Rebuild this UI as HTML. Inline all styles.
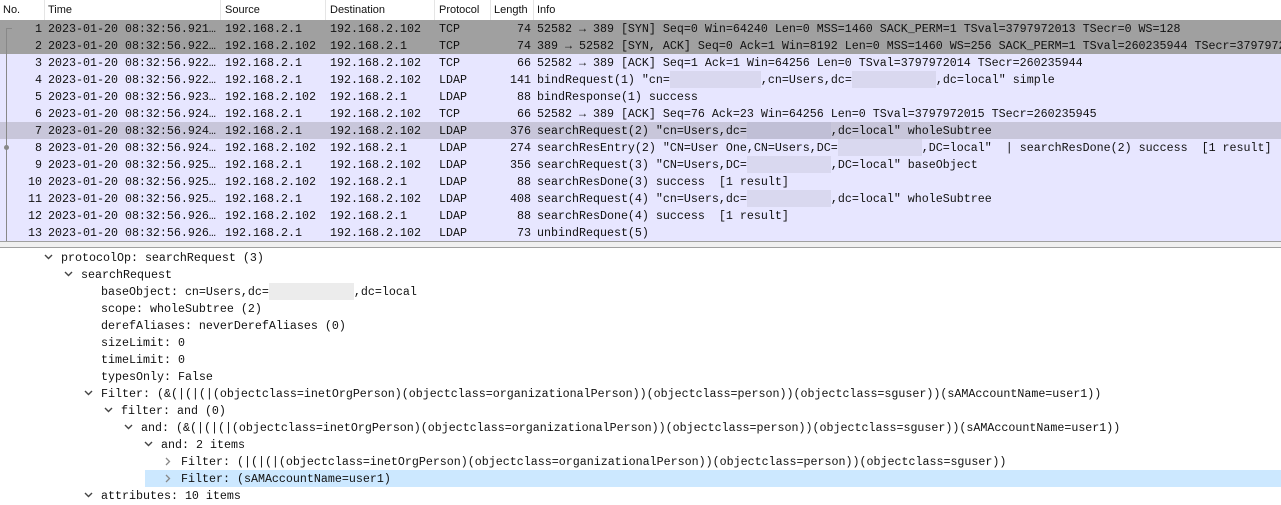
<!DOCTYPE html>
<html><head><meta charset="utf-8"><style>
*{margin:0;padding:0;box-sizing:border-box}
body{width:1281px;height:505px;overflow:hidden;background:#fff;position:relative;font-family:"Liberation Mono",monospace;font-size:11.67px;color:#111}
.hdr{position:absolute;left:0;top:0;width:1281px;height:20px;background:#fff;font-family:"Liberation Sans",sans-serif;font-size:11px}
.hdr span{position:absolute;top:4px}
.hdr i{position:absolute;top:0;width:1px;height:20px;background:#e5e5e5}
.row{position:absolute;left:0;width:1281px;height:17px;background:#e7e6ff;white-space:pre;line-height:18px}
.row span{position:absolute;top:0}
.g{background:#a0a0a0}
.s{background:#c8c6da}
.no{width:42px;left:0;text-align:right}
.ln{width:531px;left:0;text-align:right}
.b{display:inline-block;height:17px;vertical-align:top;background:#d9d8ef}
.s .b{background:#c0bfd6}
.d{position:absolute;left:0;width:1281px;height:17px;line-height:18px;white-space:pre}
.ch{position:absolute;top:5px}
.cr{position:absolute;top:5px}
.bw{display:inline-block;height:17px;vertical-align:top;background:#ececec}
</style></head><body>
<div class="hdr">
<span style="left:3px">No.</span><i style="left:44px"></i>
<span style="left:48px">Time</span><i style="left:220px"></i>
<span style="left:225px">Source</span><i style="left:325px"></i>
<span style="left:330px">Destination</span><i style="left:434px"></i>
<span style="left:439px">Protocol</span><i style="left:490px"></i>
<span style="left:494px">Length</span><i style="left:533px"></i>
<span style="left:537px">Info</span>
</div>

<div class="row g" style="top:20px"><span class="no">1</span><span style="left:48px">2023-01-20 08:32:56.921…</span><span style="left:225px">192.168.2.1</span><span style="left:330px">192.168.2.102</span><span style="left:439px">TCP</span><span class="ln">74</span><span style="left:537px">52582 → 389 [SYN] Seq=0 Win=64240 Len=0 MSS=1460 SACK_PERM=1 TSval=3797972013 TSecr=0 WS=128</span></div>
<div class="row g" style="top:37px"><span class="no">2</span><span style="left:48px">2023-01-20 08:32:56.922…</span><span style="left:225px">192.168.2.102</span><span style="left:330px">192.168.2.1</span><span style="left:439px">TCP</span><span class="ln">74</span><span style="left:537px">389 → 52582 [SYN, ACK] Seq=0 Ack=1 Win=8192 Len=0 MSS=1460 WS=256 SACK_PERM=1 TSval=260235944 TSecr=3797972013</span></div>
<div class="row" style="top:54px"><span class="no">3</span><span style="left:48px">2023-01-20 08:32:56.922…</span><span style="left:225px">192.168.2.1</span><span style="left:330px">192.168.2.102</span><span style="left:439px">TCP</span><span class="ln">66</span><span style="left:537px">52582 → 389 [ACK] Seq=1 Ack=1 Win=64256 Len=0 TSval=3797972014 TSecr=260235944</span></div>
<div class="row" style="top:71px"><span class="no">4</span><span style="left:48px">2023-01-20 08:32:56.922…</span><span style="left:225px">192.168.2.1</span><span style="left:330px">192.168.2.102</span><span style="left:439px">LDAP</span><span class="ln">141</span><span style="left:537px">bindRequest(1) "cn=<i class="b" style="width:91px"></i>,cn=Users,dc=<i class="b" style="width:84px"></i>,dc=local" simple</span></div>
<div class="row" style="top:88px"><span class="no">5</span><span style="left:48px">2023-01-20 08:32:56.923…</span><span style="left:225px">192.168.2.102</span><span style="left:330px">192.168.2.1</span><span style="left:439px">LDAP</span><span class="ln">88</span><span style="left:537px">bindResponse(1) success</span></div>
<div class="row" style="top:105px"><span class="no">6</span><span style="left:48px">2023-01-20 08:32:56.924…</span><span style="left:225px">192.168.2.1</span><span style="left:330px">192.168.2.102</span><span style="left:439px">TCP</span><span class="ln">66</span><span style="left:537px">52582 → 389 [ACK] Seq=76 Ack=23 Win=64256 Len=0 TSval=3797972015 TSecr=260235945</span></div>
<div class="row s" style="top:122px"><span class="no">7</span><span style="left:48px">2023-01-20 08:32:56.924…</span><span style="left:225px">192.168.2.1</span><span style="left:330px">192.168.2.102</span><span style="left:439px">LDAP</span><span class="ln">376</span><span style="left:537px">searchRequest(2) "cn=Users,dc=<i class="b" style="width:84px"></i>,dc=local" wholeSubtree</span></div>
<div class="row" style="top:139px"><span class="no">8</span><span style="left:48px">2023-01-20 08:32:56.924…</span><span style="left:225px">192.168.2.102</span><span style="left:330px">192.168.2.1</span><span style="left:439px">LDAP</span><span class="ln">274</span><span style="left:537px">searchResEntry(2) "CN=User One,CN=Users,DC=<i class="b" style="width:84px"></i>,DC=local"  | searchResDone(2) success  [1 result]</span></div>
<div class="row" style="top:156px"><span class="no">9</span><span style="left:48px">2023-01-20 08:32:56.925…</span><span style="left:225px">192.168.2.1</span><span style="left:330px">192.168.2.102</span><span style="left:439px">LDAP</span><span class="ln">356</span><span style="left:537px">searchRequest(3) "CN=Users,DC=<i class="b" style="width:84px"></i>,DC=local" baseObject</span></div>
<div class="row" style="top:173px"><span class="no">10</span><span style="left:48px">2023-01-20 08:32:56.925…</span><span style="left:225px">192.168.2.102</span><span style="left:330px">192.168.2.1</span><span style="left:439px">LDAP</span><span class="ln">88</span><span style="left:537px">searchResDone(3) success  [1 result]</span></div>
<div class="row" style="top:190px"><span class="no">11</span><span style="left:48px">2023-01-20 08:32:56.925…</span><span style="left:225px">192.168.2.1</span><span style="left:330px">192.168.2.102</span><span style="left:439px">LDAP</span><span class="ln">408</span><span style="left:537px">searchRequest(4) "cn=Users,dc=<i class="b" style="width:84px"></i>,dc=local" wholeSubtree</span></div>
<div class="row" style="top:207px"><span class="no">12</span><span style="left:48px">2023-01-20 08:32:56.926…</span><span style="left:225px">192.168.2.102</span><span style="left:330px">192.168.2.1</span><span style="left:439px">LDAP</span><span class="ln">88</span><span style="left:537px">searchResDone(4) success  [1 result]</span></div>
<div class="row" style="top:224px"><span class="no">13</span><span style="left:48px">2023-01-20 08:32:56.926…</span><span style="left:225px">192.168.2.1</span><span style="left:330px">192.168.2.102</span><span style="left:439px">LDAP</span><span class="ln">73</span><span style="left:537px">unbindRequest(5)</span></div>

<div style="position:absolute;left:6px;top:28px;width:1px;height:213px;background:#888"></div>
<div style="position:absolute;left:6px;top:28px;width:6px;height:1px;background:#888"></div>
<div style="position:absolute;left:4px;top:145px;width:5px;height:5px;border-radius:50%;background:#888"></div>

<div style="position:absolute;left:0;top:241px;width:1281px;height:1px;background:#a0a0a0"></div>
<div style="position:absolute;left:0;top:242px;width:1281px;height:5px;background:#f0f0f0"></div>
<div style="position:absolute;left:0;top:247px;width:1281px;height:1px;background:#a0a0a0"></div>

<div class="d" style="top:470px;left:145px;width:1136px;background:#cce8ff"></div>

<div class="d" style="top:249px"><svg class="ch" style="left:44px" width="9" height="6"><polyline points="1,1 4.5,4.5 8,1" fill="none" stroke="#444" stroke-width="1.4"/></svg><span style="position:absolute;left:61px">protocolOp: searchRequest (3)</span></div>
<div class="d" style="top:266px"><svg class="ch" style="left:64px" width="9" height="6"><polyline points="1,1 4.5,4.5 8,1" fill="none" stroke="#444" stroke-width="1.4"/></svg><span style="position:absolute;left:81px">searchRequest</span></div>
<div class="d" style="top:283px"><span style="position:absolute;left:101px">baseObject: cn=Users,dc=<i class="bw" style="width:85px"></i>,dc=local</span></div>
<div class="d" style="top:300px"><span style="position:absolute;left:101px">scope: wholeSubtree (2)</span></div>
<div class="d" style="top:317px"><span style="position:absolute;left:101px">derefAliases: neverDerefAliases (0)</span></div>
<div class="d" style="top:334px"><span style="position:absolute;left:101px">sizeLimit: 0</span></div>
<div class="d" style="top:351px"><span style="position:absolute;left:101px">timeLimit: 0</span></div>
<div class="d" style="top:368px"><span style="position:absolute;left:101px">typesOnly: False</span></div>
<div class="d" style="top:385px"><svg class="ch" style="left:84px" width="9" height="6"><polyline points="1,1 4.5,4.5 8,1" fill="none" stroke="#444" stroke-width="1.4"/></svg><span style="position:absolute;left:101px">Filter: (&amp;(|(|(|(objectclass=inetOrgPerson)(objectclass=organizationalPerson))(objectclass=person))(objectclass=sguser))(sAMAccountName=user1))</span></div>
<div class="d" style="top:402px"><svg class="ch" style="left:104px" width="9" height="6"><polyline points="1,1 4.5,4.5 8,1" fill="none" stroke="#444" stroke-width="1.4"/></svg><span style="position:absolute;left:121px">filter: and (0)</span></div>
<div class="d" style="top:419px"><svg class="ch" style="left:124px" width="9" height="6"><polyline points="1,1 4.5,4.5 8,1" fill="none" stroke="#444" stroke-width="1.4"/></svg><span style="position:absolute;left:141px">and: (&amp;(|(|(|(objectclass=inetOrgPerson)(objectclass=organizationalPerson))(objectclass=person))(objectclass=sguser))(sAMAccountName=user1))</span></div>
<div class="d" style="top:436px"><svg class="ch" style="left:144px" width="9" height="6"><polyline points="1,1 4.5,4.5 8,1" fill="none" stroke="#444" stroke-width="1.4"/></svg><span style="position:absolute;left:161px">and: 2 items</span></div>
<div class="d" style="top:453px"><svg class="cr" style="left:165px;top:4px" width="6" height="9"><polyline points="1,1 4.5,4.5 1,8" fill="none" stroke="#888" stroke-width="1.3"/></svg><span style="position:absolute;left:181px">Filter: (|(|(|(objectclass=inetOrgPerson)(objectclass=organizationalPerson))(objectclass=person))(objectclass=sguser))</span></div>
<div class="d" style="top:470px"><svg class="cr" style="left:165px;top:4px" width="6" height="9"><polyline points="1,1 4.5,4.5 1,8" fill="none" stroke="#888" stroke-width="1.3"/></svg><span style="position:absolute;left:181px">Filter: (sAMAccountName=user1)</span></div>
<div class="d" style="top:487px"><svg class="ch" style="left:84px" width="9" height="6"><polyline points="1,1 4.5,4.5 8,1" fill="none" stroke="#444" stroke-width="1.4"/></svg><span style="position:absolute;left:101px">attributes: 10 items</span></div>
</body></html>
